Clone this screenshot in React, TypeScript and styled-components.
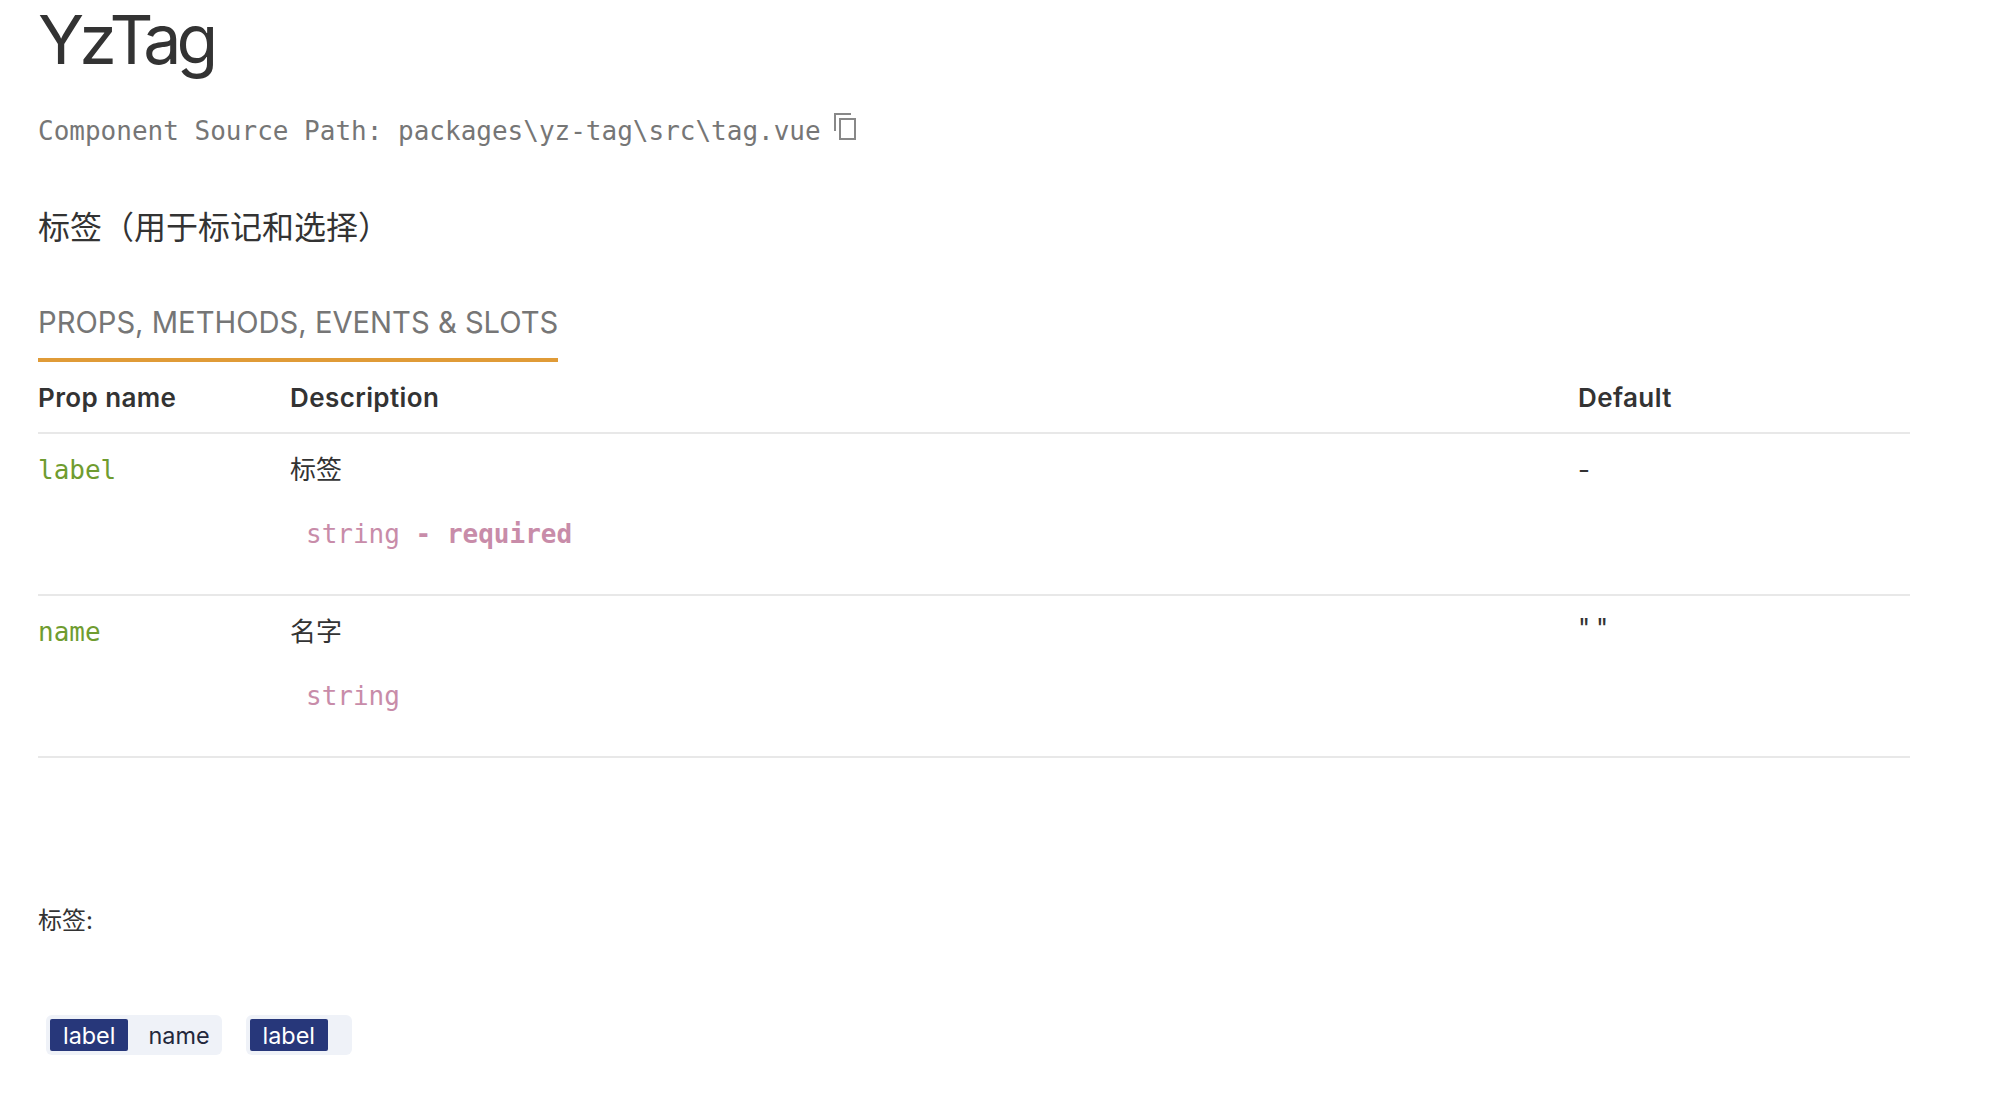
import { Fragment } from 'react';
import styled, { createGlobalStyle } from 'styled-components';

const GlobalStyle = createGlobalStyle`
  html, body {
    margin: 0;
    padding: 0;
    background: #fff;
    overflow: hidden;
  }
  body {
    font-family: Inter, "Noto Sans CJK SC", sans-serif;
    color: #333;
  }
`;

const MONO = '"DejaVu Sans Mono", "Noto Sans CJK SC", monospace';

const Page = styled.div`
  width: 1872px;
  padding: 0 0 0 38px;
`;

const Title = styled.h1`
  margin: 0;
  height: 78px;
  font-size: 68px;
  line-height: 78px;
  font-weight: 400;
  letter-spacing: -5px;
  color: #333;
`;

const SourceRow = styled.div`
  display: flex;
  align-items: flex-start;
  margin-top: 33px;
  height: 40px;
`;

const SourcePath = styled.span`
  font-family: ${MONO};
  font-size: 26px;
  line-height: 40px;
  color: #767676;
`;

const CopyIcon = styled.svg`
  width: 24px;
  height: 28px;
  margin: 2px 0 0 13px;
  color: #888;
`;

const Summary = styled.p`
  margin: 53px 0 0;
  font-size: 32px;
  line-height: 48px;
  color: #333;
`;

const TabBar = styled.div`
  margin-top: 51px;
  display: flex;
`;

const Tab = styled.div`
  font-size: 29.2px;
  line-height: 40px;
  padding-bottom: 15px;
  color: #767676;
  border-bottom: 4px solid #e09b37;
`;

const PropsTable = styled.div`
  display: grid;
  grid-template-columns: 252px 1288px 1fr;
`;

const HeadCell = styled.div`
  height: 70px;
  font-size: 26px;
  font-weight: 600;
  line-height: 72px;
  letter-spacing: 0.4px;
  color: #333;
  border-bottom: 2px solid #e8e8e8;
`;

const Cell = styled.div`
  height: 144px;
  padding-top: 16px;
  border-bottom: 2px solid #e8e8e8;
  font-size: 26px;
  line-height: 40px;
  color: #333;
`;

const PropName = styled.span`
  font-family: ${MONO};
  color: #6f9c30;
`;

const TypeLine = styled.div`
  margin: 24px 0 0 16px;
  font-family: ${MONO};
  font-size: 26px;
  line-height: 40px;
  color: #c88ca9;
`;

const Required = styled.b`
  font-weight: 700;
`;

const DefaultValue = styled.div<{ $quoted?: boolean }>`
  margin-top: ${(p) => (p.$quoted ? '-4px' : '0')};
  letter-spacing: ${(p) => (p.$quoted ? '6px' : '0')};
`;

const DemoLabel = styled.div`
  margin-top: 145px;
  font-size: 24px;
  line-height: 36px;
  color: #333;
`;

const TagRow = styled.div`
  margin: 76px 0 0 8px;
  display: flex;
  gap: 24px;
`;

const TagGroup = styled.div`
  display: flex;
  padding: 4px;
  height: 32px;
  background: #eff2f8;
  border-radius: 6px;
`;

const TagItem = styled.div<{ $active?: boolean; $empty?: boolean }>`
  display: flex;
  align-items: center;
  height: 32px;
  padding: 0 ${(p) => (p.$active ? '13px' : p.$empty ? '10px' : '8px 0 20px')};
  font-size: 23.4px;
  border-radius: 2px;
  background: ${(p) => (p.$active ? '#27377a' : 'transparent')};
  color: ${(p) => (p.$active ? '#fff' : '#23283c')};
`;

const rows = [
  { name: 'label', desc: '标签', required: true, def: '-' },
  { name: 'name', desc: '名字', required: false, def: '""' },
];

export default function App() {
  return (
    <Page>
      <GlobalStyle />
      <Title>YzTag</Title>
      <SourceRow>
        <SourcePath>Component Source Path: packages\yz-tag\src\tag.vue</SourcePath>
        <CopyIcon viewBox="0 0 24 28" fill="none" stroke="currentColor" strokeWidth="2">
          <path d="M1 18V1H17" />
          <rect x="6" y="6" width="15" height="20" />
        </CopyIcon>
      </SourceRow>
      <Summary>标签（用于标记和选择）</Summary>
      <TabBar>
        <Tab>PROPS, METHODS, EVENTS &amp; SLOTS</Tab>
      </TabBar>
      <PropsTable>
        <HeadCell>Prop name</HeadCell>
        <HeadCell>Description</HeadCell>
        <HeadCell>Default</HeadCell>
        {rows.map((row) => (
          <Fragment key={row.name}>
            <Cell>
              <PropName>{row.name}</PropName>
            </Cell>
            <Cell>
              {row.desc}
              <TypeLine>
                string{row.required && <Required> - required</Required>}
              </TypeLine>
            </Cell>
            <Cell>
              <DefaultValue $quoted={row.def !== '-'}>{row.def}</DefaultValue>
            </Cell>
          </Fragment>
        ))}
      </PropsTable>
      <DemoLabel>标签:</DemoLabel>
      <TagRow>
        <TagGroup>
          <TagItem $active>label</TagItem>
          <TagItem>name</TagItem>
        </TagGroup>
        <TagGroup>
          <TagItem $active>label</TagItem>
          <TagItem $empty />
        </TagGroup>
      </TagRow>
    </Page>
  );
}
